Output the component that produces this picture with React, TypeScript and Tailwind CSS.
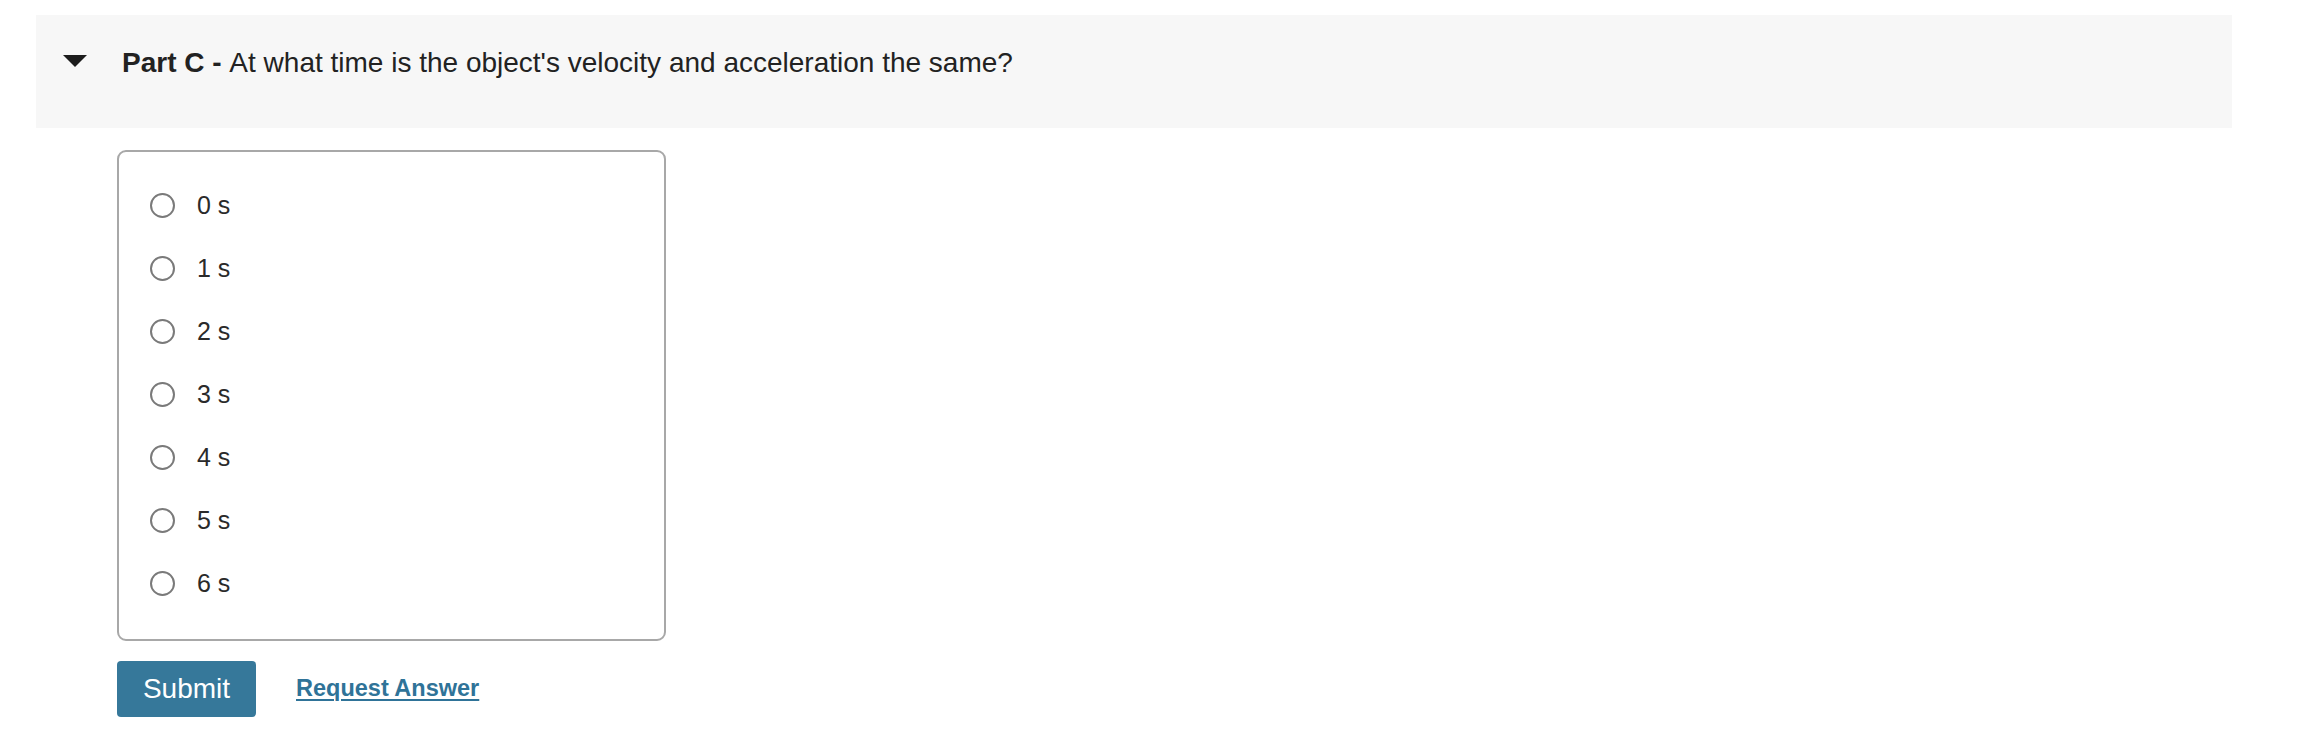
import { useState } from 'react';

const options = ['0 s', '1 s', '2 s', '3 s', '4 s', '5 s', '6 s'];

export default function App() {
  const [selected, setSelected] = useState<string | null>(null);

  return (
    <div className="min-h-screen bg-white pt-[15px] font-['Liberation_Sans',Arial,sans-serif] text-[#222]">
      <div className="ml-[36px] flex h-[113px] w-[2196px] items-start bg-[#f7f7f7] pt-[32px]">
        <div className="w-[86px] pl-[27px] pt-[8px]">
          <svg width="24" height="12" viewBox="0 0 24 12" className="block">
            <path d="M0 0 L24 0 L12 12 Z" fill="#1c1c1c" />
          </svg>
        </div>
        <h2 className="text-[28px] leading-[32px]">
          <span className="font-bold">Part C - </span>
          At what time is the object's velocity and acceleration the same?
        </h2>
      </div>

      <div className="ml-[117px] mt-[22px]">
        <div className="w-[549px] rounded-[9px] border-2 border-[#a8a8a8] pb-[24px] pt-[22px]">
          {options.map((opt) => (
            <label key={opt} className="flex h-[63px] cursor-pointer items-center pl-[31px]">
              <input
                type="radio"
                name="partC"
                checked={selected === opt}
                onChange={() => setSelected(opt)}
                className="sr-only"
              />
              <span className="flex h-[25px] w-[25px] items-center justify-center rounded-full border-2 border-[#7a7a7a] bg-white">
                {selected === opt && <span className="h-[13px] w-[13px] rounded-full bg-[#36789a]" />}
              </span>
              <span className="ml-[22px] text-[25px] leading-none text-[#2a2a2a]">{opt}</span>
            </label>
          ))}
        </div>

        <div className="mt-[20px] flex items-center">
          <button
            type="button"
            className="h-[56px] w-[139px] rounded-[4px] bg-[#36789a] font-['Liberation_Sans',Arial,sans-serif] text-[28px] text-white"
          >
            Submit
          </button>
          <a
            href="#"
            className="ml-[40px] font-['Liberation_Sans',Arial,sans-serif] text-[23.5px] font-bold text-[#2f7398] underline decoration-2 underline-offset-[3px]"
          >
            Request Answer
          </a>
        </div>
      </div>
    </div>
  );
}
